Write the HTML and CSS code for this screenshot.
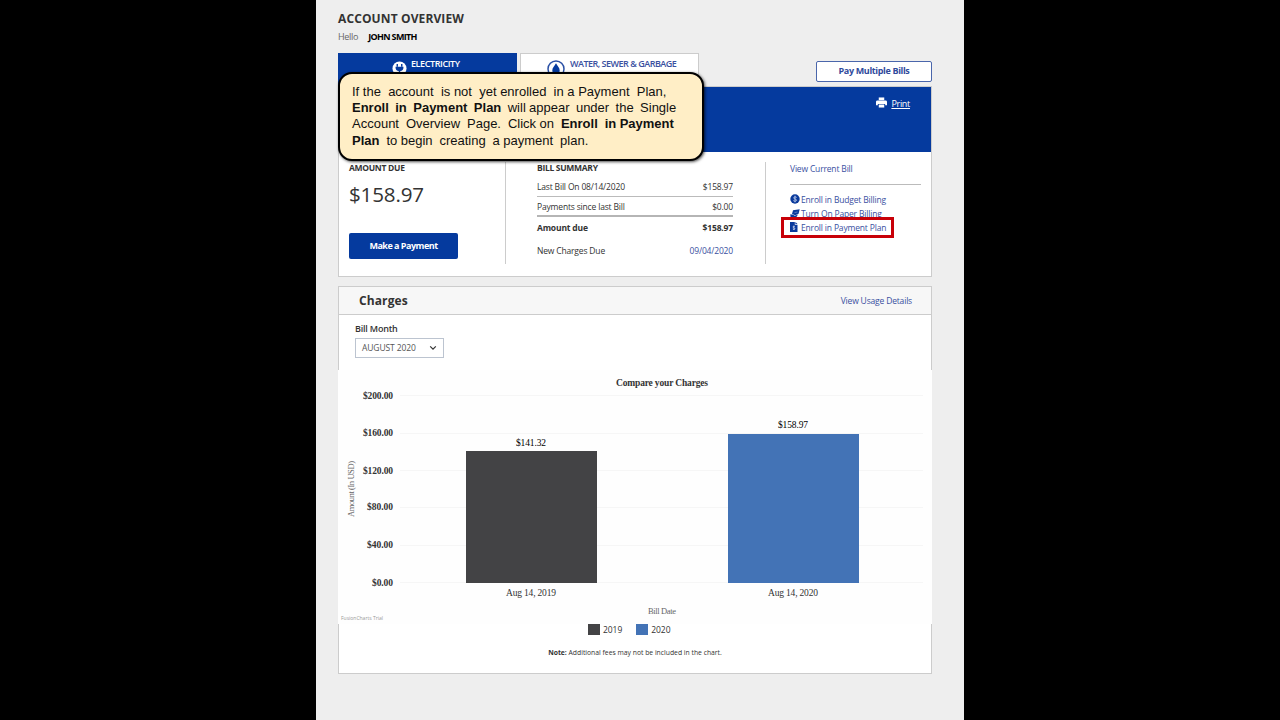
FILE: index.html
```html
<!DOCTYPE html>
<html lang="en">
<head>
  <meta charset="UTF-8">
  <title>Account Overview</title>
  <link rel="stylesheet" href="styles.css">
</head>
<body>
  <div class="page">
    <h1>ACCOUNT OVERVIEW</h1>
    <div class="hello">Hello <strong>JOHN SMITH</strong></div>

    <div class="tabs">
      <div class="tab active">
        <svg class="tab-icon" viewBox="0 0 16 16">
          <circle cx="8" cy="8" r="7.5" fill="#fff"/>
          <path d="M5.6 3.2v3M10.4 3.2v3" stroke="#053a9e" stroke-width="1.5"/>
          <path d="M3.8 6h8.4v1.2a4.2 3.6 0 0 1-3.4 3.5V14H7.2v-3.3a4.2 3.6 0 0 1-3.4-3.5z" fill="#053a9e"/>
        </svg>
        <span>ELECTRICITY</span>
      </div>
      <div class="tab water">
        <svg class="tab-icon" viewBox="0 0 18 18">
          <circle cx="9" cy="9" r="8" fill="#fff" stroke="#2a50a5" stroke-width="1.5"/>
          <path d="M9 3.2c1.6 2.8 3.7 4.6 3.7 7.2a3.7 3.7 0 0 1-7.4 0c0-2.6 2.1-4.4 3.7-7.2z" fill="#053a9e"/>
        </svg>
        <span>WATER, SEWER &amp; GARBAGE</span>
      </div>
      <button class="pay-multiple">Pay Multiple Bills</button>
    </div>

    <div class="card account">
      <div class="banner">
        <svg class="print-icon" viewBox="0 0 12 11">
          <path d="M3 0h6v3H3z" fill="#fff"/>
          <path d="M1.5 3.4h9A1.5 1.5 0 0 1 12 5v3.5h-2V7H2v1.5H0V5a1.5 1.5 0 0 1 1.5-1.6z" fill="#fff"/>
          <path d="M3 7.7h6V11H3z" fill="#fff"/>
        </svg>
        <a class="print">Print</a>
      </div>
      <div class="details">
        <div class="due">
          <h2>AMOUNT DUE</h2>
          <div class="amount">$158.97</div>
          <button class="make-payment">Make a Payment</button>
        </div>
        <div class="summary">
          <h2>BILL SUMMARY</h2>
          <div class="row"><span>Last Bill On 08/14/2020</span><span>$158.97</span></div>
          <div class="row thick"><span>Payments since last Bill</span><span>$0.00</span></div>
          <div class="row total"><span>Amount due</span><span>$158.97</span></div>
          <div class="row last"><span>New Charges Due</span><a>09/04/2020</a></div>
        </div>
        <div class="links">
          <a class="current-bill">View Current Bill</a>
          <div class="link">
            <svg viewBox="0 0 10 10">
              <circle cx="5" cy="5" r="4.7" fill="#0a3a9c"/>
              <path d="M6.7 3.5C6.3 2.7 3.6 2.6 3.6 3.9S6.6 4.8 6.6 6.2 3.7 7.4 3.3 6.5M5 1.7v6.6" fill="none" stroke="#c5d2ee" stroke-width=".8"/>
            </svg>
            <a>Enroll in Budget Billing</a>
          </div>
          <div class="link">
            <svg viewBox="0 0 10 10">
              <path d="M3 2.2L9.700 1.200 8.600 5.800 5.200 7.300 2 6z" fill="#0a3a9c"/>
              <path d="M.3 6.200l2.800.6 1.700 1 3.200-1.200-1.600 2.300H.5z" fill="#0a3a9c"/>
              <path d="M4.500 4.600l3-.6" stroke="#8fa6d6" stroke-width=".6"/>
            </svg>
            <a>Turn On Paper Billing</a>
          </div>
          <div class="link">
            <svg viewBox="0 0 10 10">
              <path d="M0 0h4.800v2.700h2.700V10H0z" fill="#0a3a9c"/>
              <path d="M5.400 0l2.100 2.100H5.400z" fill="#0a3a9c"/>
              <path d="M4.900 4.700C4.400 4 2.900 4.100 2.900 5s2 .8 2 1.700-1.600 1-2.100.3M3.900 3.700v4.300" fill="none" stroke="#dbe3f5" stroke-width=".7"/>
            </svg>
            <a>Enroll in Payment Plan</a>
            <div class="highlight"></div>
          </div>
        </div>
      </div>
    </div>

    <div class="card charges">
      <div class="charges-header">
        <h3>Charges</h3>
        <a>View Usage Details</a>
      </div>
      <div class="filter">
        <label>Bill Month</label>
        <div class="select">
          <span>AUGUST 2020</span>
          <svg viewBox="0 0 8 6"><path d="M1.2 1.3L4 4.2l2.800-2.900" fill="none" stroke="#333" stroke-width="1.2"/></svg>
        </div>
      </div>
      <svg class="chart" viewBox="338 370 594 254">
        <text class="chart-title" x="662" y="385.5" textLength="92">Compare your Charges</text>
        <g class="grid-lines">
          <path d="M400 395.5h523M400 433.5h523M400 470.5h523M400 507.5h523M400 545.5h523M400 582.5h523"/>
        </g>
        <g class="y-labels">
          <text x="393" y="398.5" textLength="30">$200.00</text>
          <text x="393" y="436" textLength="30">$160.00</text>
          <text x="393" y="473.5" textLength="30">$120.00</text>
          <text x="393" y="510" textLength="26">$80.00</text>
          <text x="393" y="548" textLength="26">$40.00</text>
          <text x="393" y="586" textLength="21">$0.00</text>
        </g>
        <text class="axis-title" transform="translate(354 489) rotate(-90)" textLength="56">Amount (In USD)</text>
        <rect x="466" y="451" width="131" height="132" fill="#434345"/>
        <rect x="728" y="434" width="131" height="149" fill="#4373b6"/>
        <g class="bar-labels">
          <text x="531" y="445.5" textLength="30">$141.32</text>
          <text x="793" y="428" textLength="30">$158.97</text>
        </g>
        <g class="x-labels">
          <text x="531" y="596" textLength="50">Aug 14, 2019</text>
          <text x="793" y="596" textLength="50">Aug 14, 2020</text>
        </g>
        <text class="axis-title" x="662" y="614" textLength="28">Bill Date</text>
        <text class="trial" x="341" y="620" textLength="42">FusionCharts Trial</text>
      </svg>
      <div class="legend">
        <span class="swatch"></span><span>2019</span>
        <span class="swatch blue"></span><span>2020</span>
      </div>
      <div class="note"><strong>Note:</strong> Additional fees may not be included in the chart.</div>
    </div>

    <div class="callout">
      <div class="line">If the  account  is not  yet enrolled  in a Payment  Plan,</div>
      <div class="line wide"><strong>Enroll  in  Payment  Plan</strong>  will appear  under  the  Single</div>
      <div class="line tight">Account  Overview  Page.  Click on  <strong>Enroll  in Payment</strong></div>
      <div class="line tight"><strong>Plan</strong>  to begin  creating  a payment  plan.</div>
    </div>
  </div>
</body>
</html>
```
FILE: styles.css
```css
:root {
  --blue: #053a9e;
  --link: #3a509f;
  --text: #333;
  --border: #ccc;
}

* {
  box-sizing: border-box;
}

body {
  margin: 0;
  background: #000;
  font-family: "Open Sans", sans-serif;
  font-size: 8.5px;
  letter-spacing: -0.17px;
  color: var(--text);
}

h1, h2, h3 {
  margin: 0;
}

button {
  font-family: inherit;
  font-weight: 700;
  border-radius: 2px;
  padding: 0;
}

.page {
  position: relative;
  width: 648px;
  height: 720px;
  margin: 0 auto;
  padding: 11px 32px 0 22px;
  background: #eee;
  overflow: hidden;
}

h1 {
  font-size: 12px;
  line-height: 16px;
  letter-spacing: 0.12px;
}

.hello {
  display: flex;
  gap: 10px;
  margin-top: 3px;
  font-size: 9px;
  line-height: 13px;
  letter-spacing: -0.3px;
  color: #666;
}

.hello strong {
  color: #000;
  letter-spacing: -0.65px;
}

.tabs {
  display: flex;
  gap: 3px;
  height: 33px;
  margin-top: 10px;
}

.tab {
  display: flex;
  width: 179px;
  height: 33px;
  padding-left: 53px;
  gap: 4px;
  background: #fff;
  border: 1px solid var(--border);
  color: var(--link);
  font-size: 9px;
  font-weight: 600;
  line-height: 19px;
  letter-spacing: -0.4px;
}

.tab.active {
  background: var(--blue);
  border-color: var(--blue);
  color: #fff;
}

.tab.water {
  padding-left: 26px;
  gap: 5px;
  letter-spacing: -0.5px;
}

.tab-icon {
  width: 15px;
  height: 15px;
  margin-top: 7px;
}

.water .tab-icon {
  width: 18px;
  height: 18px;
  margin-top: 6px;
}

.pay-multiple {
  width: 116px;
  height: 21px;
  margin: 8px 0 0 auto;
  padding-bottom: 2px;
  background: #fff;
  border: 1px solid #4a66ab;
  color: #2f4a9c;
  font-size: 9px;
  letter-spacing: -0.35px;
}

.card {
  width: 594px;
  background: #fff;
  border: 1px solid var(--border);
}

.account {
  height: 191px;
}

.banner {
  display: flex;
  height: 65px;
  padding: 10px 21px 0 0;
  justify-content: flex-end;
  gap: 4px;
  background: var(--blue);
}

.print-icon {
  width: 11px;
  height: 11px;
}

.print {
  color: #fff;
  font-size: 9px;
  line-height: 13px;
  letter-spacing: -0.3px;
  text-decoration: underline;
}

.details {
  display: flex;
  padding-top: 10px;
}

.details > div {
  height: 102px;
}

h2 {
  font-size: 8.5px;
  font-weight: 700;
  line-height: 12px;
  letter-spacing: -0.3px;
}

.due {
  width: 167px;
  padding-left: 10px;
  border-right: 1px solid var(--border);
}

.amount {
  margin-top: 6px;
  font-size: 20.6px;
  line-height: 28px;
}

.make-payment {
  width: 109px;
  height: 26px;
  margin-top: 25px;
  padding-bottom: 2px;
  background: var(--blue);
  border: none;
  color: #fff;
  font-size: 9px;
  letter-spacing: -0.5px;
}

.summary {
  width: 260px;
  padding: 0 32px 0 31px;
  border-right: 1px solid var(--border);
}

.row {
  display: flex;
  height: 20px;
  justify-content: space-between;
  border-bottom: 1px solid #bbb;
  line-height: 18px;
}

.summary h2 + .row {
  height: 23px;
  padding-top: 4px;
}

.row.thick {
  border-bottom: 2px solid #b5b5b5;
  line-height: 20px;
}

.row.total {
  border: none;
  font-weight: 700;
  line-height: 21px;
}

.row.last {
  border: none;
  padding-top: 5px;
}

a {
  color: var(--link);
}

.links {
  padding: 1px 0 0 24px;
}

.current-bill {
  display: block;
  width: 131px;
  height: 22px;
  margin-bottom: 7px;
  border-bottom: 1px solid #bbb;
  line-height: 12px;
}

.link {
  position: relative;
  display: flex;
  height: 14px;
  align-items: center;
  gap: 1px;
}

.link svg {
  width: 10px;
  height: 10px;
}

.highlight {
  position: absolute;
  top: -3px;
  left: -9px;
  width: 113px;
  height: 21px;
  border: 3px solid #c80008;
}

.charges {
  height: 388px;
  margin-top: 9px;
}

.charges-header {
  display: flex;
  height: 28px;
  padding: 0 19px 0 20px;
  align-items: center;
  justify-content: space-between;
  background: #f7f7f7;
  border-bottom: 1px solid var(--border);
}

h3 {
  font-size: 12px;
  letter-spacing: 0.1px;
}

.filter {
  height: 55px;
  padding: 7px 0 0 16px;
}

.filter label {
  display: block;
  font-size: 9px;
  font-weight: 600;
  line-height: 13px;
  letter-spacing: -0.2px;
}

.select {
  display: flex;
  width: 89px;
  height: 20px;
  margin-top: 3px;
  padding: 0 6px 1px;
  align-items: center;
  justify-content: space-between;
  border: 1px solid #bcc4d0;
  color: #555;
  letter-spacing: -0.1px;
}

.select svg {
  width: 8px;
  height: 6px;
}

/* the chart paints over the card's side borders */
.chart {
  position: relative;
  display: block;
  width: 594px;
  height: 254px;
  margin-left: -1px;
  background: #fefefe;
  font-family: "Liberation Serif", serif;
  font-size: 9.5px;
  letter-spacing: 0;
  fill: #333;
}

.chart-title {
  font-weight: 700;
  text-anchor: middle;
}

.grid-lines {
  stroke: #f6f6f6;
}

.y-labels {
  font-weight: 700;
  text-anchor: end;
}

.bar-labels, .x-labels, .axis-title {
  text-anchor: middle;
}

.bar-labels {
  fill: #000;
}

.axis-title {
  font-size: 8.5px;
  fill: #666;
}

.trial {
  font-family: "Open Sans", sans-serif;
  font-size: 5px;
  fill: #999;
}

.legend {
  display: flex;
  height: 11px;
  margin-left: 249px;
  align-items: center;
  line-height: 10px;
  letter-spacing: -0.05px;
}

.swatch {
  width: 12px;
  height: 11px;
  margin-right: 3px;
  background: #434345;
}

.swatch.blue {
  margin-left: 14px;
  background: #4373b6;
}

.note {
  margin-top: 13px;
  text-align: center;
  font-size: 6.8px;
  line-height: 10px;
  letter-spacing: 0;
}

/* tutorial callout */
.callout {
  position: absolute;
  top: 72px;
  left: 22px;
  width: 366px;
  height: 89px;
  padding: 10px 0 0 12px;
  background: #ffeec6;
  border: 2px solid #000;
  border-radius: 14px;
  box-shadow: 1px 1px 3px rgba(0, 0, 0, 0.7);
  color: #111;
  font-family: "Liberation Sans", Arial, sans-serif;
  font-size: 13px;
  line-height: 16.2px;
  letter-spacing: 0;
}

.callout .line {
  white-space: pre;
}

.callout .wide {
  word-spacing: -0.4px;
}

.callout .tight {
  word-spacing: -0.15px;
}
```
